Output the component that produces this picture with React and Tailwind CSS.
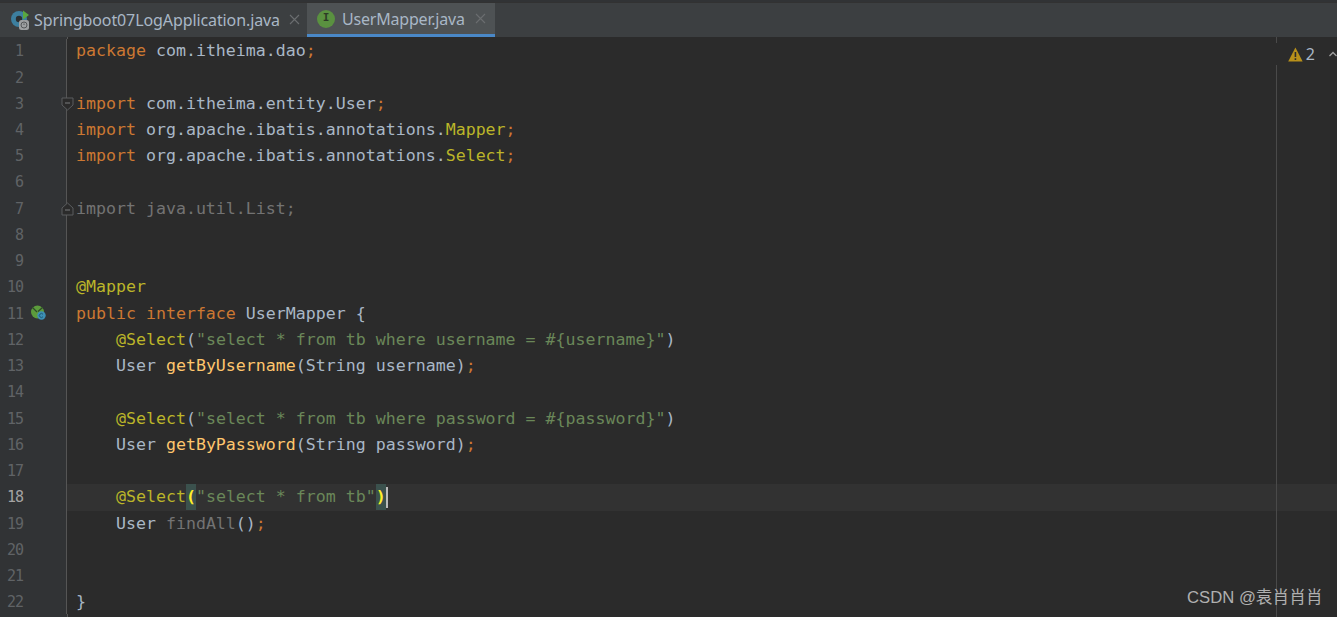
import React from "react";

const K = ({ children }) => <span className="text-[#cc7832]">{children}</span>;
const A = ({ children }) => <span className="text-[#bbb529]">{children}</span>;
const S = ({ children }) => <span className="text-[#6a8759]">{children}</span>;
const M = ({ children }) => <span className="text-[#ffc66d]">{children}</span>;
const Dim = ({ children }) => <span className="text-[#737373]">{children}</span>;
const Brace = ({ children }) => (
  <span className="inline-block h-[26px] bg-[#3b514d] font-bold text-[#ffef28]">{children}</span>
);

const lines = [
  <><K>package</K> com.itheima.dao<K>;</K></>,
  null,
  <><K>import</K> com.itheima.entity.User<K>;</K></>,
  <><K>import</K> org.apache.ibatis.annotations.<A>Mapper</A><K>;</K></>,
  <><K>import</K> org.apache.ibatis.annotations.<A>Select</A><K>;</K></>,
  null,
  <Dim>import java.util.List;</Dim>,
  null,
  null,
  <A>@Mapper</A>,
  <><K>public interface</K> UserMapper {"{"}</>,
  <>    <A>@Select</A>(<S>"select * from tb where username = #{"{"}username{"}"}"</S>)</>,
  <>    User <M>getByUsername</M>(String username)<K>;</K></>,
  null,
  <>    <A>@Select</A>(<S>"select * from tb where password = #{"{"}password{"}"}"</S>)</>,
  <>    User <M>getByPassword</M>(String password)<K>;</K></>,
  null,
  <>    <A>@Select</A><Brace>(</Brace><S>"select * from tb"</S><span className="relative inline-block"><Brace>)</Brace><span className="absolute right-[-2px] top-[3px] h-[21px] w-[2px] bg-[#bbbbbb]" /></span></>,
  <>    User <Dim>findAll</Dim>()<K>;</K></>,
  null,
  null,
  "}",
];

function FoldMark({ flip }) {
  return (
    <svg width="13" height="14" viewBox="0 0 13 14" className={`absolute left-[61px] top-[6px] ${flip ? "rotate-180" : ""}`}>
      <path d="M1 1h11v7l-5.5 5L1 8z" fill="#2b2b2b" stroke="#5a5d5f" />
      <path d="M4 6h5" stroke="#7a7d7f" />
    </svg>
  );
}

function BeanIcon() {
  return (
    <svg width="17" height="16" viewBox="0 0 17 16" className="absolute left-[30px] top-[4px]">
      <circle cx="7.5" cy="7" r="6.5" fill="#5c9c3c" />
      <path d="M2.5 2.5 7 7M12.5 2.5 8 6.5" stroke="#2f4a2a" strokeWidth="1.2" />
      <circle cx="11.5" cy="10.5" r="4.2" fill="#3d8fb5" />
      <path d="M13 9.3a2 2 0 1 0 0 2.4" fill="none" stroke="#1f5a75" strokeWidth="1" />
    </svg>
  );
}

function TabClose() {
  return (
    <svg width="11" height="11" viewBox="0 0 11 11">
      <path d="M1 1l9 9M10 1l-9 9" stroke="#6b6e70" strokeWidth="1.1" />
    </svg>
  );
}

function SpringTabIcon() {
  return (
    <svg width="20" height="22" viewBox="0 0 20 22">
      <circle cx="9" cy="10" r="8" fill="#3d7f9f" />
      <circle cx="9" cy="10" r="3.2" fill="#2b2f31" />
      <path d="M13 1.5v9l6-4.5z" fill="#59a83f" />
      <rect x="9" y="11" width="10" height="10" rx="2.5" fill="#9da0a2" />
      <circle cx="14" cy="16" r="3" fill="none" stroke="#55585a" />
      <path d="M14 14.5V16" stroke="#55585a" />
    </svg>
  );
}

function InterfaceTabIcon() {
  return (
    <div className="flex h-[18px] w-[18px] items-center justify-center rounded-full bg-[#5a9140] font-['DejaVu_Sans_Mono',monospace] text-[11px] font-bold text-[#2d3a26]">
      I
    </div>
  );
}

export default function App() {
  return (
    <div className="relative flex h-[617px] w-[1337px] flex-col overflow-hidden bg-[#2b2b2b]">
      <div className="h-[3px] border-b border-[#323232] bg-[#313335]" />
      {/* tab bar */}
      <div className="flex h-[34px] items-stretch bg-[#3c3f41] font-['Noto_Sans',sans-serif] text-[16px] text-[#a9b7c6]">
        <div className="flex w-[307px] items-center pb-[1px] pl-[10px]">
          <SpringTabIcon />
          <span className="ml-[4px] whitespace-nowrap tracking-[-0.1px]">Springboot07LogApplication.java</span>
          <span className="ml-[9px] flex"><TabClose /></span>
        </div>
        <div className="flex w-[188px] items-center border-b-[3px] border-[#4a88c7] bg-[#4e5254] pl-[10px]">
          <InterfaceTabIcon />
          <span className="ml-[7px] whitespace-nowrap tracking-[-0.2px]">UserMapper.java</span>
          <span className="ml-[10px] flex"><TabClose /></span>
        </div>
      </div>
      {/* editor */}
      <div className="pt-[1.3px] font-['DejaVu_Sans_Mono',monospace] text-[16.6px] leading-[26.24px] text-[#a9b7c6]">
        {lines.map((line, i) => {
          const current = i === 17;
          return (
            <div key={i} className="flex h-[26.24px]">
              <div className={`relative w-[67px] shrink-0 border-r border-[#555555] bg-[#313335] text-[15px] tracking-[-1px] ${current ? "text-[#a4a3a3]" : "text-[#606366]"}`}>
                <span className="block w-[23px] text-right">{i + 1}</span>
                {i === 2 && <FoldMark />}
                {i === 6 && <FoldMark flip />}
                {i === 10 && <BeanIcon />}
              </div>
              <div className={`min-w-0 flex-1 whitespace-pre pl-[9px] ${current ? "bg-[#323232]" : ""}`}>
                {line}
              </div>
            </div>
          );
        })}
      </div>
      <div className="pointer-events-none absolute left-0 top-[37px] h-[2px] w-[67px] bg-[#313335]" />
      <div className="pointer-events-none absolute left-[67px] top-[37px] h-[2px] w-px bg-[#555555]" />
      <div className="pointer-events-none absolute bottom-0 left-0 h-[3px] w-[67px] bg-[#313335]" />
      <div className="pointer-events-none absolute bottom-0 left-[67px] h-[3px] w-px bg-[#555555]" />
      {/* right margin guide */}
      <div className="pointer-events-none absolute bottom-0 left-[1276px] top-[37px] w-px bg-[#4a4a4a]" />
      {/* inspection widget */}
      <div className="absolute left-[1270px] top-[43px] flex h-[22px] w-[67px] items-center bg-[#2b2b2b] pl-[18px] font-['Noto_Sans',sans-serif] text-[16px] text-[#a9b7c6]">
        <svg width="15" height="15" viewBox="0 0 15 15">
          <path d="M7.5 0.5 14.8 14.5H0.2z" fill="#b8901a" />
          <path d="M7.5 5v5M7.5 11.2v1.8" stroke="#2b2b2b" strokeWidth="1.6" />
        </svg>
        <span className="ml-[3px]">2</span>
        <svg width="8" height="6" viewBox="0 0 8 6" className="ml-[14px] shrink-0">
          <path d="M0.5 5 4 1.5 7.5 5" fill="none" stroke="#a0a0a0" strokeWidth="1.3" />
        </svg>
      </div>
      {/* watermark */}
      <div className="absolute left-[1187px] top-[587px] whitespace-nowrap font-['Liberation_Sans','Noto_Sans_CJK_SC',sans-serif] text-[16.7px] leading-[22px] text-[#b0b0b0]">
        CSDN @袁肖肖肖
      </div>
    </div>
  );
}
